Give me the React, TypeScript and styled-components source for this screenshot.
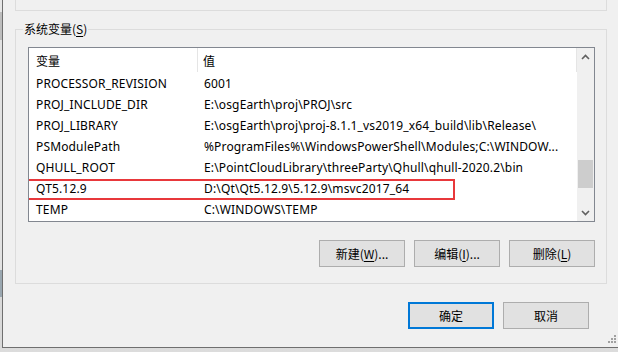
import React from "react";
import styled, { createGlobalStyle } from "styled-components";

const Global = createGlobalStyle`
  html, body { margin: 0; padding: 0; }
  body {
    width: 618px; height: 352px; overflow: hidden; background: #d2d2d2;
    font-family: "Noto Sans", "Noto Sans CJK SC", sans-serif; font-size: 12px; color: #000;
  }
`;

const Screen = styled.div`
  width: 618px; height: 352px; display: flex; flex-direction: column;
  background: linear-gradient(#cbcbcb, #dcdcdc);
`;

const Desk = styled.div`
  display: flex; height: 348px; flex: none;
`;

const BehindStrip = styled.div`
  width: 2px; flex: none;
  background: linear-gradient(#e6e6e6 0 12px, #bdbdbd 12px 40px, #e2e2e2 40px 270px, #9aa7b0 270px 297px, #d9d9d9 297px);
`;

const Window = styled.div`
  position: relative; flex: 1; display: flex; flex-direction: column;
  background: #f0f0f0; border-left: 1px solid #6f6f6f; border-bottom: 1px solid #6f6f6f;
  padding: 0 11px 0 12px;
`;

const UserGroup = styled.div`
  height: 10px; flex: none;
  border: 1px solid #dcdcdc; border-top: none;
`;

const SystemGroup = styled.fieldset`
  margin: 10px 0 0 0; padding: 0 11px 16px 12px; min-width: 0;
  border: 1px solid #dcdcdc;
  display: flex; flex-direction: column;
`;

const GroupCaption = styled.legend`
  margin-left: -5px; padding: 0 1px; line-height: 16px;
  font-family: "Noto Sans CJK SC", sans-serif; font-size: 12px;
`;

const Key = styled.span`
  text-decoration: underline; text-underline-offset: 2px;
`;

const ListBox = styled.div`
  margin-top: 10px; height: 173px; border: 1px solid #828790;
  display: flex; background: #fff; overflow: hidden;
`;

const ListMain = styled.div`
  flex: 1; display: flex; flex-direction: column;
`;

const HeaderRow = styled.div`
  display: grid; grid-template-columns: 169px 1fr; height: 25px; flex: none;
  font-family: "Noto Sans CJK SC", sans-serif;
`;

const HeaderCell = styled.div<{ $last?: boolean }>`
  display: flex; align-items: center; padding-left: ${p => (p.$last ? 5 : 7)}px;
  border-right: 1px solid #e5e5e5;
  margin-bottom: 1px;
`;

const Row = styled.div`
  position: relative; display: grid; grid-template-columns: 170px 1fr; height: 21px; flex: none;
  align-items: center; white-space: nowrap; letter-spacing: 0.15px;
`;

const Cell = styled.div<{ $first?: boolean }>`
  padding-left: ${p => (p.$first ? 7 : 5)}px; overflow: hidden;
`;

const Mark = styled.div`
  position: absolute; left: -2px; top: 1px; width: 428px; height: 21px;
  box-sizing: border-box; border: 2px solid #e8383b; pointer-events: none;
`;

const ScrollBar = styled.div`
  width: 17px; flex: none; background: #f0f0f0; display: flex; flex-direction: column;
`;

const ArrowBtn = styled.div`
  height: 17px; flex: none; display: flex; align-items: center; justify-content: center;
`;

const Track = styled.div`
  flex: 1; display: flex; flex-direction: column;
`;

const Thumb = styled.div`
  margin: 95px 1px 0 1px; height: 28px; background: #cdcdcd;
`;

const ButtonRow = styled.div<{ $inset?: number }>`
  display: flex; justify-content: flex-end; gap: 9px;
  padding-right: ${p => p.$inset ?? 0}px;
`;

const Button = styled.button<{ $default?: boolean }>`
  width: 86px; height: 27px; box-sizing: border-box; padding: 0;
  background: #e1e1e1; border: ${p => (p.$default ? "2px solid #0078d7" : "1px solid #adadad")};
  font-family: "Noto Sans CJK SC", sans-serif; font-size: 12px; color: #000;
`;

const Footer = styled(ButtonRow)`
  margin-top: 18px;
`;

const Actions = styled(ButtonRow)`
  margin-top: 18px;
`;

const Grip = styled.svg`
  position: absolute; right: 2px; bottom: 2px;
`;

const rows: [string, string][] = [
  ["PROCESSOR_REVISION", "6001"],
  ["PROJ_INCLUDE_DIR", "E:\\osgEarth\\proj\\PROJ\\src"],
  ["PROJ_LIBRARY", "E:\\osgEarth\\proj\\proj-8.1.1_vs2019_x64_build\\lib\\Release\\"],
  ["PSModulePath", "%ProgramFiles%\\WindowsPowerShell\\Modules;C:\\WINDOW..."],
  ["QHULL_ROOT", "E:\\PointCloudLibrary\\threeParty\\Qhull\\qhull-2020.2\\bin"],
  ["QT5.12.9", "D:\\Qt\\Qt5.12.9\\5.12.9\\msvc2017_64"],
  ["TEMP", "C:\\WINDOWS\\TEMP"],
];

const Chevron = ({ up }: { up?: boolean }) => (
  <svg width="9" height="6" viewBox="0 0 9 6">
    <polyline
      points={up ? "1,5 4.5,1.5 8,5" : "1,1 4.5,4.5 8,1"}
      fill="none" stroke="#606060" strokeWidth="1.6"
    />
  </svg>
);

export default function App() {
  return (
    <>
      <Global />
      <Screen>
        <Desk>
          <BehindStrip />
          <Window>
            <UserGroup />
            <SystemGroup>
              <GroupCaption>系统变量(<Key>S</Key>)</GroupCaption>
              <ListBox>
                <ListMain>
                  <HeaderRow>
                    <HeaderCell>变量</HeaderCell>
                    <HeaderCell $last>值</HeaderCell>
                  </HeaderRow>
                  {rows.map(([k, v]) => (
                    <Row key={k}>
                      <Cell $first>{k}</Cell>
                      <Cell>{v}</Cell>
                      {k === "QT5.12.9" && <Mark />}
                    </Row>
                  ))}
                </ListMain>
                <ScrollBar>
                  <ArrowBtn><Chevron up /></ArrowBtn>
                  <Track><Thumb /></Track>
                  <ArrowBtn><Chevron /></ArrowBtn>
                </ScrollBar>
              </ListBox>
              <Actions>
                <Button>新建(<Key>W</Key>)...</Button>
                <Button>编辑(<Key>I</Key>)...</Button>
                <Button>删除(<Key>L</Key>)</Button>
              </Actions>
            </SystemGroup>
            <Footer $inset={18}>
              <Button $default>确定</Button>
              <Button>取消</Button>
            </Footer>
            <Grip width="10" height="10" viewBox="0 0 10 10">
              <g fill="#a0a0a0">
                <rect x="8" y="0" width="2" height="2" />
                <rect x="5" y="3" width="2" height="2" />
                <rect x="8" y="3" width="2" height="2" />
                <rect x="2" y="6" width="2" height="2" />
                <rect x="5" y="6" width="2" height="2" />
                <rect x="8" y="6" width="2" height="2" />
              </g>
            </Grip>
          </Window>
        </Desk>
      </Screen>
    </>
  );
}
